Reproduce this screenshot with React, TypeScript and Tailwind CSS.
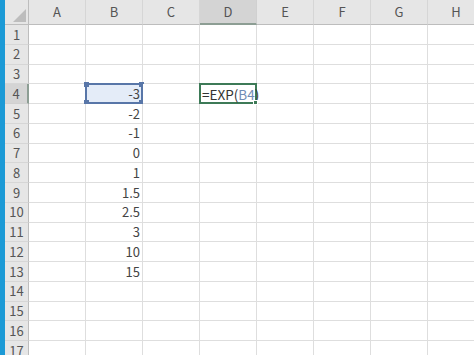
const cols = ["A", "B", "C", "D", "E", "F", "G", "H"];
const rows = Array.from({ length: 17 }, (_, i) => i + 1);
const values: Record<number, string> = {
  4: "-3",
  5: "-2",
  6: "-1",
  7: "0",
  8: "1",
  9: "1.5",
  10: "2.5",
  11: "3",
  12: "10",
  13: "15",
};

const font = { fontFamily: '"Noto Sans CJK JP", "Noto Sans", sans-serif' };

function Cell({ row, col }: { row: number; col: string }) {
  const isB4 = row === 4 && col === "B";
  const isD4 = row === 4 && col === "D";
  const value = col === "B" ? values[row] : undefined;

  return (
    <div className="relative w-[57px] shrink-0 border-r border-b border-[#dedede] bg-white">
      {isB4 && (
        <div className="absolute -left-px -top-px -right-px -bottom-px border-2 border-[#5876a8] bg-[#e4ecf8]">
          <span className="absolute -left-[3px] -top-[3px] h-[5px] w-[5px] bg-[#5876a8]" />
          <span className="absolute -right-[3px] -top-[3px] h-[5px] w-[5px] bg-[#5876a8]" />
          <span className="absolute -left-[3px] -bottom-[3px] h-[5px] w-[5px] bg-[#5876a8]" />
          <span className="absolute -right-[3px] -bottom-[3px] h-[5px] w-[5px] bg-[#5876a8]" />
        </div>
      )}
      {isD4 && (
        <div className="absolute -left-px -top-px -right-px -bottom-px z-10 flex items-center border-2 border-[#3d7a57] bg-white pl-[1px] text-[13.5px] text-[#333]">
          <span>=EXP(</span>
          <span className="text-[#6f8db6]">B4</span>
          <span>)</span>
          <span className="absolute -right-[3px] -bottom-[3px] h-[5px] w-[5px] border border-white bg-[#3d7a57]" />
        </div>
      )}
      {value && (
        <div className="relative flex h-full items-center justify-end pr-[2px] text-[13px] text-[#444]">
          {value}
        </div>
      )}
    </div>
  );
}

export default function App() {
  return (
    <div className="flex h-[355px] w-[474px] overflow-hidden bg-white" style={font}>
      <div className="w-[5px] shrink-0 bg-[#1c9ad6]" />
      <div className="flex flex-col">
        <div className="flex h-[25px] shrink-0">
          <div className="relative w-[24px] shrink-0 border-r border-b border-[#bdbdbd] bg-[#e6e6e6]">
            <svg className="absolute right-[2px] bottom-[2px]" width="13" height="13" viewBox="0 0 13 13">
              <polygon points="13,0 13,13 0,13" fill="#bdbdbd" />
            </svg>
          </div>
          {cols.map((c) => (
            <div
              key={c}
              className={
                c === "D"
                  ? "flex w-[57px] shrink-0 items-center justify-center border-r border-b-2 border-r-[#d0d0d0] border-b-[#8d9e94] bg-[#d4d4d4] pt-[1px] text-[13px] text-[#555]"
                  : "flex w-[57px] shrink-0 items-center justify-center border-r border-b border-r-[#d6d6d6] border-b-[#bdbdbd] bg-[#e6e6e6] text-[13px] text-[#555]"
              }
            >
              {c}
            </div>
          ))}
        </div>
        {rows.map((r) => (
          <div key={r} className="flex h-[19.75px] shrink-0">
            <div
              className={
                r === 4
                  ? "flex w-[24px] shrink-0 items-center justify-center border-r-2 border-b border-r-[#8d9e94] border-b-[#d0d0d0] bg-[#d4d4d4] text-[13px] text-[#555]"
                  : "flex w-[24px] shrink-0 items-center justify-center border-r border-b border-r-[#bdbdbd] border-b-[#d6d6d6] bg-[#e6e6e6] text-[13px] text-[#555]"
              }
            >
              {r}
            </div>
            {cols.map((c) => (
              <Cell key={c} row={r} col={c} />
            ))}
          </div>
        ))}
      </div>
    </div>
  );
}
